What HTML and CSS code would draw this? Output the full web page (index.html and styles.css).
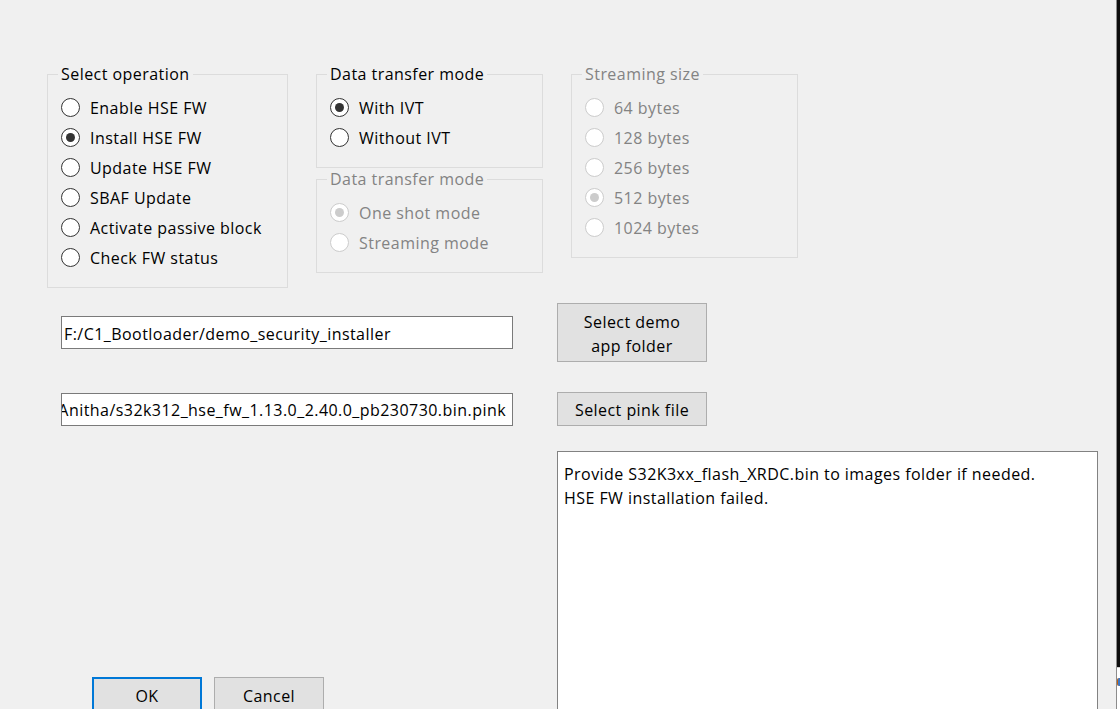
FILE: index.html
```html
<!DOCTYPE html>
<html>
<head>
    <meta charset="UTF-8">
    <title>HSE FW Installer</title>
    <link rel="stylesheet" href="styles.css">
</head>
<body>
    <div class="window">
        <div class="dialog">
            <div class="groups">
                <fieldset class="group group-operation">
                    <legend>Select operation</legend>
                    <label class="option"><span class="radio"></span><span class="caption">Enable HSE FW</span></label>
                    <label class="option"><span class="radio checked"></span><span class="caption">Install HSE FW</span></label>
                    <label class="option"><span class="radio"></span><span class="caption">Update HSE FW</span></label>
                    <label class="option"><span class="radio"></span><span class="caption">SBAF Update</span></label>
                    <label class="option"><span class="radio"></span><span class="caption">Activate passive block</span></label>
                    <label class="option"><span class="radio"></span><span class="caption">Check FW status</span></label>
                </fieldset>

                <div class="group-stack">
                    <fieldset class="group">
                        <legend>Data transfer mode</legend>
                        <label class="option"><span class="radio checked"></span><span class="caption">With IVT</span></label>
                        <label class="option"><span class="radio"></span><span class="caption">Without IVT</span></label>
                    </fieldset>
                    <fieldset class="group disabled">
                        <legend>Data transfer mode</legend>
                        <label class="option"><span class="radio checked"></span><span class="caption">One shot mode</span></label>
                        <label class="option"><span class="radio"></span><span class="caption">Streaming mode</span></label>
                    </fieldset>
                </div>

                <fieldset class="group disabled">
                    <legend>Streaming size</legend>
                    <label class="option"><span class="radio"></span><span class="caption">64 bytes</span></label>
                    <label class="option"><span class="radio"></span><span class="caption">128 bytes</span></label>
                    <label class="option"><span class="radio"></span><span class="caption">256 bytes</span></label>
                    <label class="option"><span class="radio checked"></span><span class="caption">512 bytes</span></label>
                    <label class="option"><span class="radio"></span><span class="caption">1024 bytes</span></label>
                </fieldset>
            </div>

            <div class="paths">
                <div class="field"><span>F:/C1_Bootloader/demo_security_installer</span></div>
                <button class="btn btn-tall">Select demo<br>app folder</button>
                <div class="field field-end"><span>Anitha/s32k312_hse_fw_1.13.0_2.40.0_pb230730.bin.pink</span></div>
                <button class="btn btn-short">Select pink file</button>
            </div>

            <div class="bottom">
                <div class="actions">
                    <button class="btn btn-action btn-default">OK</button>
                    <button class="btn btn-action">Cancel</button>
                </div>
                <div class="log">
                    Provide S32K3xx_flash_XRDC.bin to images folder if needed.<br>
                    HSE FW installation failed.
                </div>
            </div>
        </div>

        <div class="edge">
            <div class="edge-dark"></div>
            <div class="edge-light"><span class="edge-icon"></span></div>
        </div>
    </div>
</body>
</html>
```

FILE: styles.css
```css
html, body {
    margin: 0;
    padding: 0;
}
body {
    font-family: "Open Sans", "Noto Sans", sans-serif;
    font-size: 16px;
    letter-spacing: 0.45px;
    color: #000;
    background-color: #f0f0f0;
    width: 1120px;
    height: 709px;
    overflow: hidden;
}
.window {
    display: flex;
    height: 709px;
}
.dialog {
    width: 1116px;
    padding: 64px 0 0 47px;
    box-sizing: border-box;
}

/* group boxes */
.groups {
    display: flex;
    align-items: flex-start;
    gap: 28px;
}
.group-stack {
    display: flex;
    flex-direction: column;
    gap: 1px;
}
.group {
    margin: 0;
    width: 227px;
    box-sizing: border-box;
    border: 1px solid #dcdcdc;
    padding: 8px 0 15px 13px;
}
.group-operation {
    width: 241px;
}
.group legend {
    padding: 0 3px;
    margin-left: -3px;
    line-height: 20px;
}
.option {
    display: flex;
    align-items: center;
    height: 30px;
    gap: 10px;
    white-space: nowrap;
}
.caption {
    padding-top: 2px;
}
.radio {
    width: 19px;
    height: 19px;
    box-sizing: border-box;
    border: 1px solid #333;
    border-radius: 50%;
    background-color: #fff;
    display: flex;
    align-items: center;
    justify-content: center;
}
.radio.checked::after {
    content: "";
    width: 9px;
    height: 9px;
    border-radius: 50%;
    background-color: #333;
}
.disabled {
    color: #838383;
}
.disabled .radio {
    border-color: #cccccc;
}
.disabled .radio.checked::after {
    background-color: #cccccc;
}

/* path fields */
.paths {
    margin: 15px 0 0 14px;
    display: grid;
    grid-template-columns: 452px 150px;
    column-gap: 44px;
    row-gap: 30px;
    align-items: center;
}
.field {
    height: 33px;
    box-sizing: border-box;
    border: 1px solid #7a7a7a;
    background-color: #fff;
    padding: 2px 6px 0 2px;
    display: flex;
    align-items: center;
    overflow: hidden;
    white-space: nowrap;
}
.field-end {
    justify-content: flex-end;
}
.btn {
    font-family: inherit;
    font-size: 16px;
    letter-spacing: 0.45px;
    color: #000;
    background-color: #e1e1e1;
    border: 1px solid #adadad;
    border-radius: 0;
    padding: 2px 0 0;
    margin: 0;
    cursor: pointer;
}
.btn-tall {
    height: 59px;
    line-height: 24px;
}
.btn-short {
    height: 34px;
}

/* bottom part */
.bottom {
    display: flex;
    margin: 25px 0 0 14px;
}
.actions {
    width: 496px;
    box-sizing: border-box;
    padding: 226px 0 0 31px;
    display: flex;
    align-items: flex-start;
    gap: 12px;
}
.btn-action {
    width: 110px;
    height: 34px;
    padding-top: 3px;
}
.btn-default {
    border: 2px solid #0078d7;
}
.log {
    width: 541px;
    height: 300px;
    box-sizing: border-box;
    border: 1px solid #828282;
    background-color: #fff;
    padding: 10px 6px 8px;
    line-height: 24px;
}

/* neighbouring window edge */
.edge {
    width: 4px;
    display: flex;
    flex-direction: column;
    border-left: 1px solid #8c8c8c;
    box-sizing: border-box;
}
.edge-dark {
    height: 667px;
    background-color: #0d0d0d;
}
.edge-light {
    flex: 1;
    background-color: #fff;
    border-top: 1px solid #d0d0d0;
    padding-top: 10px;
}
.edge-icon {
    display: block;
    width: 3px;
    height: 8px;
    border-radius: 2px 0 0 2px;
    background-color: #3a78c8;
    border-left: 1px solid #c06010;
}
```
